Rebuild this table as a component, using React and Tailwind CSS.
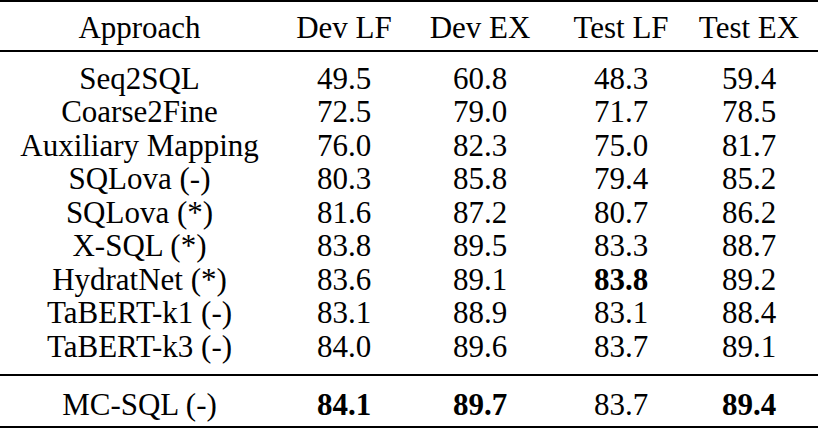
const COLS = "grid grid-cols-[279px_130px_142px_140px_116px] text-center";

const ROWS = [
  ["Seq2SQL", "49.5", "60.8", "48.3", "59.4"],
  ["Coarse2Fine", "72.5", "79.0", "71.7", "78.5"],
  ["Auxiliary Mapping", "76.0", "82.3", "75.0", "81.7"],
  ["SQLova (-)", "80.3", "85.8", "79.4", "85.2"],
  ["SQLova (*)", "81.6", "87.2", "80.7", "86.2"],
  ["X-SQL (*)", "83.8", "89.5", "83.3", "88.7"],
  ["HydratNet (*)", "83.6", "89.1", { b: "83.8" }, "89.2"],
  ["TaBERT-k1 (-)", "83.1", "88.9", "83.1", "88.4"],
  ["TaBERT-k3 (-)", "84.0", "89.6", "83.7", "89.1"],
];

const LAST = ["MC-SQL (-)", { b: "84.1" }, { b: "89.7" }, "83.7", { b: "89.4" }];

function Cell({ v }) {
  if (v && typeof v === "object") return <div className="font-bold">{v.b}</div>;
  return <div>{v}</div>;
}

function Row({ cells }) {
  return (
    <div className={COLS}>
      {cells.map((c, i) => <Cell key={i} v={c} />)}
    </div>
  );
}

export default function App() {
  return (
    <div className="w-[821px] h-[429px] bg-white text-black font-['Liberation_Serif','Times_New_Roman',serif] text-[31px] leading-[33.5px]">
      <div className="w-[818px]">
        {/* header */}
        <div className="border-t-2 border-black pt-[9px] pb-[5px]">
          <Row cells={["Approach", "Dev LF", "Dev EX", "Test LF", "Test EX"]} />
        </div>
        <div className="border-t-2 border-black pt-[10px] pb-[11px]">
          {ROWS.map((r, i) => <Row key={i} cells={r} />)}
        </div>
        {/* ours */}
        <div className="border-t-2 border-b-2 border-black pt-[12px] pb-[4px]">
          <Row cells={LAST} />
        </div>
      </div>
    </div>
  );
}
